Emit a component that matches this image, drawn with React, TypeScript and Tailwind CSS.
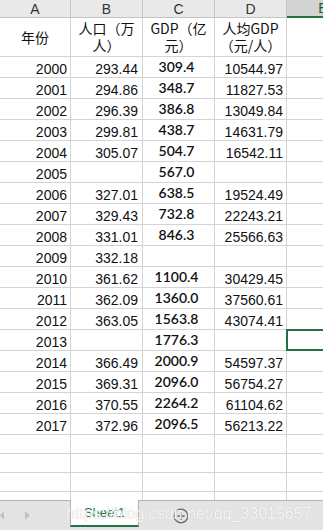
import React from "react";

const rows: [string, string, string, string][] = [
    ["2000", "293.44", "309.4", "10544.97"],
    ["2001", "294.86", "348.7", "11827.53"],
    ["2002", "296.39", "386.8", "13049.84"],
    ["2003", "299.81", "438.7", "14631.79"],
    ["2004", "305.07", "504.7", "16542.11"],
    ["2005", "", "567.0", ""],
    ["2006", "327.01", "638.5", "19524.49"],
    ["2007", "329.43", "732.8", "22243.21"],
    ["2008", "331.01", "846.3", "25566.63"],
    ["2009", "332.18", "", ""],
    ["2010", "361.62", "1100.4", "30429.45"],
    ["2011", "362.09", "1360.0", "37560.61"],
    ["2012", "363.05", "1563.8", "43074.41"],
    ["2013", "", "1776.3", ""],
    ["2014", "366.49", "2000.9", "54597.37"],
    ["2015", "369.31", "2096.0", "56754.27"],
    ["2016", "370.55", "2264.2", "61104.62"],
    ["2017", "372.96", "2096.5", "56213.22"],
];

const cols = "grid grid-cols-[71px_72px_72px_72px_72px] w-[359px] shrink-0";
const cell = "border-r border-b border-[#d4d4d4]";
const cjk = "font-['Noto_Sans_CJK_SC',sans-serif]";

function ColumnHeaders() {
    const letters = ["A", "B", "C", "D"];
    return (
        <div className={`${cols} h-[18px] text-[14px] text-[#333]`}>
            {letters.map((l) => (
                <div key={l} className="flex items-center justify-center bg-[#e9e9e9] border-r border-b border-[#c4c4c4] leading-none">
                    {l}
                </div>
            ))}
            <div className="flex items-center justify-center bg-[#d3d3d3] border-b-2 border-[#217346] leading-none text-[#1e5c38]">
                E
            </div>
        </div>
    );
}

function TitleRow() {
    return (
        <div className={`${cols} h-[39px] text-[14px] leading-[17px] text-[#111] ${cjk}`}>
            <div className={`${cell} flex items-center justify-center`}>年份</div>
            <div className={`${cell} flex flex-col items-center justify-center`}>
                <span>人口（万</span>
                <span>人）</span>
            </div>
            <div className={`${cell} flex flex-col items-center justify-center`}>
                <span>GDP（亿</span>
                <span>元）</span>
            </div>
            <div className={`${cell} flex flex-col items-center justify-center`}>
                <span>人均GDP</span>
                <span>（元/人）</span>
            </div>
            <div className={cell} />
        </div>
    );
}

function DataRow({ r, selected }: { r: [string, string, string, string]; selected: boolean }) {
    return (
        <div className={`${cols} h-[21px] text-[14px] leading-4 text-[#111]`}>
            <div className={`${cell} flex items-end justify-end pr-[3px]`}>{r[0]}</div>
            <div className={`${cell} flex items-end justify-end pr-[4px]`}>{r[1]}</div>
            <div className={`${cell} flex items-end justify-center pr-1 pb-[2px] font-['Lato',sans-serif] font-semibold`}>
                {r[2]}
            </div>
            <div className={`${cell} flex items-end justify-end pr-[3px]`}>{r[3]}</div>
            <div className={selected ? "border-2 border-[#217346] -mt-px -ml-px h-[22px]" : cell} />
        </div>
    );
}

function EmptyRow({ h }: { h: string }) {
    return (
        <div className={`${cols} ${h}`}>
            {[0, 1, 2, 3, 4].map((i) => (
                <div key={i} className={cell} />
            ))}
        </div>
    );
}

function TabBar() {
    return (
        <div className="relative h-[30px] shrink-0 flex bg-[#e4e4e4] border-t border-[#b4b4b4]">
            <div className="w-[70px] shrink-0 flex items-center">
                <svg width="4" height="9" viewBox="0 0 4 9" className="ml-0">
                    <path d="M4 0 L0 4.5 L4 9 Z" fill="#c2c2c2" />
                </svg>
                <svg width="5" height="9" viewBox="0 0 5 9" className="ml-[21px]">
                    <path d="M0 0 L5 4.5 L0 9 Z" fill="#c2c2c2" />
                </svg>
            </div>
            <div className="-mt-px w-[69px] h-[27px] shrink-0 bg-white border-x border-[#b4b4b4] border-b-2 border-b-[#217346] flex items-center justify-center text-[13px] text-[#217346] font-['Liberation_Sans',sans-serif]">
                Sheet1
            </div>
            <div className="flex items-center pl-[34px]">
                <svg width="16" height="16" viewBox="0 0 16 16">
                    <circle cx="8" cy="8" r="6.8" fill="none" stroke="#6a6a6a" strokeWidth="1.3" />
                    <path d="M8 4.3 V11.7 M4.3 8 H11.7" stroke="#6a6a6a" strokeWidth="1.5" />
                </svg>
            </div>
            <div className="absolute left-[66px] top-[3px] text-[16px] leading-5 whitespace-nowrap text-[#f6f6f6] font-['Liberation_Sans',sans-serif] [text-shadow:0_0_1px_rgba(0,0,0,0.18)] pointer-events-none">
                https://blog.csdn.net/qq_33015657
            </div>
        </div>
    );
}

export default function App() {
    return (
        <div className="w-[323px] h-[530px] overflow-hidden bg-white flex flex-col font-['Liberation_Sans',sans-serif]">
            <div className="flex-1 flex flex-col overflow-hidden">
                <ColumnHeaders />
                <TitleRow />
                {rows.map((r) => (
                    <DataRow key={r[0]} r={r} selected={r[0] === "2013"} />
                ))}
                <EmptyRow h="h-[19px]" />
                <EmptyRow h="h-[19px]" />
                <EmptyRow h="h-[19px]" />
                <EmptyRow h="h-[19px]" />
            </div>
            <TabBar />
        </div>
    );
}
